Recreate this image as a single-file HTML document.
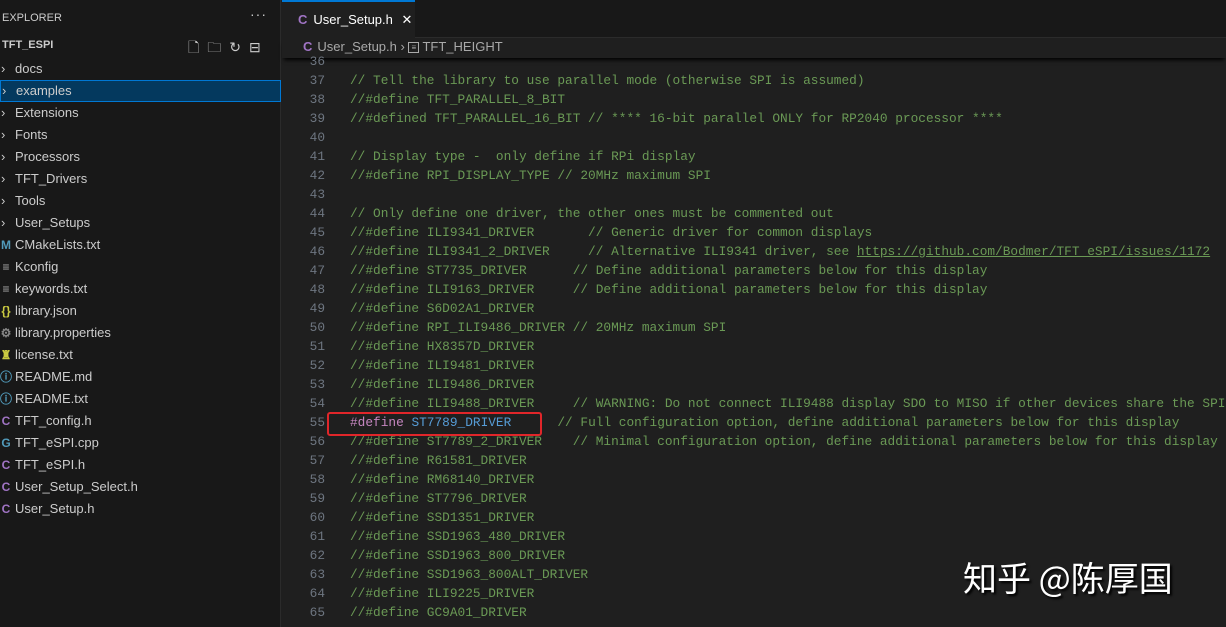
<!DOCTYPE html><html><head><meta charset="utf-8"><style>
*{margin:0;padding:0;box-sizing:border-box}
html{width:1226px;height:627px;overflow:hidden}
body{width:1226px;height:627px;background:#1f1f1f;overflow:hidden;position:relative;font-family:"Liberation Sans",sans-serif}
#side{position:absolute;left:0;top:0;width:281px;height:627px;background:#181818;border-right:1px solid #2b2b2b;color:#ccc;font-size:13px}
.row{position:absolute;left:0;width:281px;height:22px;line-height:22px;padding-left:15px;color:#ccc}
.row .ic{position:absolute;left:0;width:12px;text-align:center;font-weight:bold;font-size:12px}
.chev{position:absolute;left:1px;top:0;color:#ccc;font-size:13px}
#tabs{position:absolute;left:282px;top:0;width:944px;height:38px;background:#181818;border-bottom:1px solid #2b2b2b}
.tab{position:absolute;left:0;top:0;width:133px;height:39px;background:#1f1f1f;border-top:2px solid #0078d4;color:#fff;font-size:13px;line-height:36px;padding-left:16px}
#crumb{position:absolute;left:282px;top:38px;height:20px;color:#a9a9a9;font-size:13px;line-height:18px;padding-left:21px;width:944px;box-shadow:0 4px 4px -2px #000}
#code{position:absolute;left:282px;top:52px;width:944px;font-family:"Liberation Mono",monospace;font-size:12.8px;color:#6a9955}
.l{height:19px;line-height:19px;position:relative}
.n{position:absolute;left:0;width:43px;text-align:right;color:#6e7681}
.t{position:absolute;left:68px;white-space:pre}
.k{color:#c586c0}.m{color:#569cd6}
a{color:#6a9955;text-decoration:underline}
</style></head><body>
<div id="side">
<div style="position:absolute;left:2px;top:12px;font-size:11px;color:#ccc">EXPLORER</div>
<div style="position:absolute;left:250px;top:6px;font-size:14px;color:#ccc;letter-spacing:1px">···</div>
<div style="position:absolute;left:2px;top:39px;font-size:11px;font-weight:bold;color:#ccc">TFT_ESPI</div>
<div style="position:absolute;left:188px;top:37px;color:#ccc;font-size:14px;letter-spacing:8px">🗋🗀↻⊟</div>
<div class="row" style="top:58px"><span class="chev">›</span>docs</div>
<div class="row" style="top:80px;background:#04395e;border:1px solid #0078d4;line-height:20px"><span class="chev">›</span>examples</div>
<div class="row" style="top:102px"><span class="chev">›</span>Extensions</div>
<div class="row" style="top:124px"><span class="chev">›</span>Fonts</div>
<div class="row" style="top:146px"><span class="chev">›</span>Processors</div>
<div class="row" style="top:168px"><span class="chev">›</span>TFT_Drivers</div>
<div class="row" style="top:190px"><span class="chev">›</span>Tools</div>
<div class="row" style="top:212px"><span class="chev">›</span>User_Setups</div>
<div class="row" style="top:234px"><span class="ic" style="color:#519aba">M</span>CMakeLists.txt</div>
<div class="row" style="top:256px"><span class="ic" style="color:#aaa">≡</span>Kconfig</div>
<div class="row" style="top:278px"><span class="ic" style="color:#aaa">≡</span>keywords.txt</div>
<div class="row" style="top:300px"><span class="ic" style="color:#cbcb41">{}</span>library.json</div>
<div class="row" style="top:322px"><span class="ic" style="color:#888">⚙</span>library.properties</div>
<div class="row" style="top:344px"><span class="ic" style="color:#cbcb41">♜</span>license.txt</div>
<div class="row" style="top:366px"><span class="ic" style="color:#519aba">ⓘ</span>README.md</div>
<div class="row" style="top:388px"><span class="ic" style="color:#519aba">ⓘ</span>README.txt</div>
<div class="row" style="top:410px"><span class="ic" style="color:#a074c4">C</span>TFT_config.h</div>
<div class="row" style="top:432px"><span class="ic" style="color:#519aba">G</span>TFT_eSPI.cpp</div>
<div class="row" style="top:454px"><span class="ic" style="color:#a074c4">C</span>TFT_eSPI.h</div>
<div class="row" style="top:476px"><span class="ic" style="color:#a074c4">C</span>User_Setup_Select.h</div>
<div class="row" style="top:498px"><span class="ic" style="color:#a074c4">C</span>User_Setup.h</div>
</div>
<div id="tabs"><div class="tab"><b style="color:#a074c4;margin-right:6px">C</b>User_Setup.h <span style="margin-left:5px">✕</span></div></div>
<div id="crumb"><b style="color:#a074c4;margin-right:5px">C</b>User_Setup.h › <span style="border:1px solid #aaa;font-size:8px;padding:0 2px;vertical-align:1px">≡</span> TFT_HEIGHT</div>
<div id="code"><div class="l"><span class="n">36</span></div><div class="l"><span class="n">37</span><span class="t">// Tell the library to use parallel mode (otherwise SPI is assumed)</span></div><div class="l"><span class="n">38</span><span class="t">//#define TFT_PARALLEL_8_BIT</span></div><div class="l"><span class="n">39</span><span class="t">//#defined TFT_PARALLEL_16_BIT // **** 16-bit parallel ONLY for RP2040 processor ****</span></div><div class="l"><span class="n">40</span></div><div class="l"><span class="n">41</span><span class="t">// Display type -  only define if RPi display</span></div><div class="l"><span class="n">42</span><span class="t">//#define RPI_DISPLAY_TYPE // 20MHz maximum SPI</span></div><div class="l"><span class="n">43</span></div><div class="l"><span class="n">44</span><span class="t">// Only define one driver, the other ones must be commented out</span></div><div class="l"><span class="n">45</span><span class="t">//#define ILI9341_DRIVER       // Generic driver for common displays</span></div><div class="l"><span class="n">46</span><span class="t">//#define ILI9341_2_DRIVER     // Alternative ILI9341 driver, see <a>https://github.com/Bodmer/TFT_eSPI/issues/1172</a></span></div><div class="l"><span class="n">47</span><span class="t">//#define ST7735_DRIVER      // Define additional parameters below for this display</span></div><div class="l"><span class="n">48</span><span class="t">//#define ILI9163_DRIVER     // Define additional parameters below for this display</span></div><div class="l"><span class="n">49</span><span class="t">//#define S6D02A1_DRIVER</span></div><div class="l"><span class="n">50</span><span class="t">//#define RPI_ILI9486_DRIVER // 20MHz maximum SPI</span></div><div class="l"><span class="n">51</span><span class="t">//#define HX8357D_DRIVER</span></div><div class="l"><span class="n">52</span><span class="t">//#define ILI9481_DRIVER</span></div><div class="l"><span class="n">53</span><span class="t">//#define ILI9486_DRIVER</span></div><div class="l"><span class="n">54</span><span class="t">//#define ILI9488_DRIVER     // WARNING: Do not connect ILI9488 display SDO to MISO if other devices share the SPI bus</span></div><div class="l"><span class="n">55</span><span class="t"><span class="k">#define</span> <span class="m">ST7789_DRIVER</span>      // Full configuration option, define additional parameters below for this display</span></div><div class="l"><span class="n">56</span><span class="t">//#define ST7789_2_DRIVER    // Minimal configuration option, define additional parameters below for this display</span></div><div class="l"><span class="n">57</span><span class="t">//#define R61581_DRIVER</span></div><div class="l"><span class="n">58</span><span class="t">//#define RM68140_DRIVER</span></div><div class="l"><span class="n">59</span><span class="t">//#define ST7796_DRIVER</span></div><div class="l"><span class="n">60</span><span class="t">//#define SSD1351_DRIVER</span></div><div class="l"><span class="n">61</span><span class="t">//#define SSD1963_480_DRIVER</span></div><div class="l"><span class="n">62</span><span class="t">//#define SSD1963_800_DRIVER</span></div><div class="l"><span class="n">63</span><span class="t">//#define SSD1963_800ALT_DRIVER</span></div><div class="l"><span class="n">64</span><span class="t">//#define ILI9225_DRIVER</span></div><div class="l"><span class="n">65</span><span class="t">//#define GC9A01_DRIVER</span></div></div>
<div style="position:absolute;left:327px;top:412px;width:215px;height:24px;border:2px solid #e0262a;border-radius:3px"></div>
<div style="position:absolute;left:963px;top:552px;font-family:'Noto Sans CJK SC',sans-serif;font-size:34px;color:#fff;text-shadow:2px 2px 2px #000;white-space:nowrap">知乎 @陈厚国</div>
</body></html>
